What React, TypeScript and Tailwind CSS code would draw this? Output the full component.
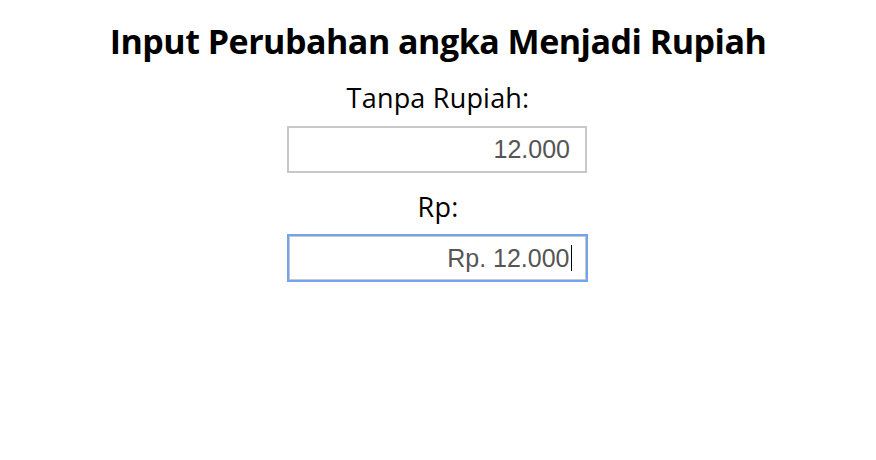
import { useState } from 'react'

export default function App() {
  const [plain, setPlain] = useState('12.000')
  const [rupiah, setRupiah] = useState('Rp. 12.000')

  return (
    <div className="w-full min-h-[460px] bg-white pt-[18px] text-center">
      <h1 className="text-[34px] leading-[46px] font-bold text-black font-['Open_Sans',sans-serif] tracking-[-0.5px]">
        Input Perubahan angka Menjadi Rupiah
      </h1>

      <div className="mt-[16px] flex flex-col items-center font-['Open_Sans',sans-serif]">
        <label className="text-[27px] leading-[36px] text-black tracking-[0.2px]">Tanpa Rupiah:</label>
        <input
          type="text"
          value={plain}
          onChange={e => setPlain(e.target.value)}
          className="mt-[10px] mr-[2px] w-[300px] h-[47px] border-2 border-[#c8c8c8] pl-[14px] pr-[15px] text-right text-[25px] text-[#555] font-['Liberation_Sans',Arial,sans-serif] outline-none"
        />

        <label className="mt-[16px] text-[27px] leading-[36px] text-black tracking-[0.2px]">Rp:</label>
        <div className="relative mt-[9px] mr-[2px]">
          <input
            type="text"
            value={rupiah}
            onChange={e => setRupiah(e.target.value)}
            className="w-[301px] h-[48px] border-2 border-[#72a3ef] shadow-[inset_0_0_0_1px_#c8c8c8] pl-[14px] pr-[16px] text-right text-[25px] text-[#555] font-['Liberation_Sans',Arial,sans-serif] outline-none caret-transparent"
          />
          <span className="absolute right-[16px] top-[11px] h-[26px] w-px bg-black" />
        </div>
      </div>
    </div>
  )
}
